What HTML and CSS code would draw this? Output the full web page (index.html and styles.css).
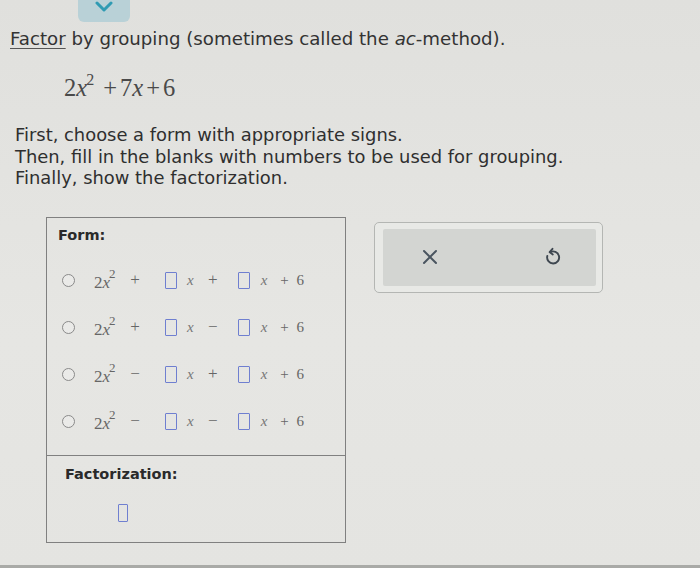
FILE: index.html
```html
<!DOCTYPE html>
<html>
<head>
<meta charset="utf-8">
<link rel="stylesheet" href="styles.css">
</head>
<body>
<div class="page">
  <div class="tab">
    <svg width="20" height="12" viewBox="0 0 20 12"><path d="M3 2 L10 9 L17 2" fill="none" stroke="#2f9bb3" stroke-width="3" stroke-linecap="round" stroke-linejoin="round"/></svg>
  </div>
  <p class="title"><span class="u">Factor</span> by grouping (sometimes called the <i>ac</i>-method).</p>
  <div class="poly">2<i>x</i><sup>2</sup> <span class="op">+</span>7<i>x</i><span class="op">+</span>6</div>
  <div class="instr">
    <div>First, choose a form with appropriate signs.</div>
    <div>Then, fill in the blanks with numbers to be used for grouping.</div>
    <div>Finally, show the factorization.</div>
  </div>
  <div class="work">
    <div class="card">
      <div class="formsec">
        <div class="label">Form:</div>
        <div class="row"><span class="radio"></span><span class="t">2<i>x</i><sup>2</sup></span><span class="s">+</span><span class="blank"></span><i class="x">x</i><span class="s2">+</span><span class="blank b2"></span><i class="x">x</i><span class="c">+ 6</span></div>
        <div class="row"><span class="radio"></span><span class="t">2<i>x</i><sup>2</sup></span><span class="s">+</span><span class="blank"></span><i class="x">x</i><span class="s2">&minus;</span><span class="blank b2"></span><i class="x">x</i><span class="c">+ 6</span></div>
        <div class="row"><span class="radio"></span><span class="t">2<i>x</i><sup>2</sup></span><span class="s">&minus;</span><span class="blank"></span><i class="x">x</i><span class="s2">+</span><span class="blank b2"></span><i class="x">x</i><span class="c">+ 6</span></div>
        <div class="row"><span class="radio"></span><span class="t">2<i>x</i><sup>2</sup></span><span class="s">&minus;</span><span class="blank"></span><i class="x">x</i><span class="s2">&minus;</span><span class="blank b2"></span><i class="x">x</i><span class="c">+ 6</span></div>
      </div>
      <div class="factsec">
        <div class="label">Factorization:</div>
        <span class="blank fblank"></span>
      </div>
    </div>
    <div class="tools">
      <div class="toolsin">
        <svg class="ic" width="18" height="18" viewBox="0 0 18 18"><path d="M3 3 L15 15 M15 3 L3 15" stroke="#4a5560" stroke-width="2" stroke-linecap="round"/></svg>
        <svg class="ic" width="20" height="20" viewBox="0 0 20 20"><path d="M7.2 5.2 A6 6 0 1 1 4.3 9" fill="none" stroke="#3e4750" stroke-width="1.9" stroke-linecap="round"/><path d="M9.5 1.8 L6.6 5.1 L9.8 7.4" fill="none" stroke="#3e4750" stroke-width="1.9" stroke-linecap="round" stroke-linejoin="round"/></svg>
      </div>
    </div>
  </div>
  <div class="bottom"></div>
</div>
</body>
</html>
```

FILE: styles.css
```css
html, body {
  margin: 0;
  padding: 0;
}
body {
  width: 700px;
  height: 568px;
  overflow: hidden;
  background: #e3e3e0;
  font-family: "DejaVu Sans", Verdana, sans-serif;
  color: #2e2e2e;
}
.page {
  position: relative;
  width: 700px;
  height: 568px;
  background: linear-gradient(180deg, #e0e0dd 0%, #e6e6e3 60%, #e4e4e1 100%);
}
.tab {
  margin-left: 78px;
  width: 52px;
  height: 22px;
  background: #b9d1d7;
  border-radius: 0 0 6px 6px;
  display: flex;
  justify-content: center;
  align-items: flex-start;
}
.tab svg { margin-top: 1px; }
.title {
  margin: 5px 0 0 10px;
  font-size: 18.2px;
  line-height: 24px;
  color: #333;
}
.u {
  text-decoration: underline;
  text-decoration-color: #555;
  text-underline-offset: 3px;
}
.poly {
  margin: 23px 0 0 64px;
  font-family: "Liberation Serif", "Times New Roman", serif;
  font-size: 24.5px;
  color: #4a4a4a;
  line-height: 28px;
}
.poly sup {
  font-size: 16px;
  vertical-align: 11px;
  line-height: 0;
  margin-left: -1px;
}
.poly .op { margin: 0 3px; }
.instr {
  margin: 22px 0 0 15px;
  font-size: 17.9px;
  line-height: 21.5px;
  color: #2f2f2f;
}
.work {
  display: flex;
  align-items: flex-start;
  margin-top: 28px;
}
.card {
  margin-left: 46px;
  width: 298px;
  border: 1.5px solid #808080;
}
.label {
  font-weight: bold;
  font-size: 14.5px;
  color: #2a2a2a;
}
.formsec {
  padding: 9px 0 10px 11px;
  border-bottom: 1.5px solid #808080;
}
.formsec .label { margin-bottom: 14px; }
.row {
  display: flex;
  align-items: center;
  height: 47px;
  font-family: "Liberation Serif", "Times New Roman", serif;
  font-size: 15px;
  color: #666;
}
.radio {
  width: 11px;
  height: 11px;
  border: 1.5px solid #8a8a8a;
  border-radius: 50%;
  margin-left: 4px;
  margin-right: 19px;
  background: #eaeae8;
}
.t { width: 30px; position: relative; top: 3px; font-size: 17px; }
.t sup { font-size: 13px; vertical-align: 10px; line-height: 0; margin-left: -1px; }
.s { width: 22px; text-align: center; font-size: 17px; margin-right: 19px; }
.s2 { width: 24px; text-align: center; font-size: 17px; margin: 0 13px 0 7px; }
.blank {
  display: inline-block;
  width: 10px;
  height: 15px;
  border: 1.5px solid #6f7fd0;
  border-radius: 1px;
  margin-right: 10px;
}
.b2 { margin-right: 11px; }
.x { color: #777; font-size: 15px; }
.c { margin-left: 13px; font-size: 15px; word-spacing: 4px; }
.factsec {
  padding: 10px 0 20px 18px;
  height: 56px;
}
.fblank {
  display: block;
  margin: 22px 0 0 53px;
  width: 8px;
  height: 16px;
}
.tools {
  margin-left: 28px;
  margin-top: 5px;
  width: 229px;
  height: 71px;
  border: 1px solid #b4b6b3;
  border-radius: 5px;
  background: #e8e9e6;
  box-sizing: border-box;
  padding: 6px 6px 6px 8px;
}
.toolsin {
  height: 100%;
  background: #d3d5d2;
  border-radius: 2px;
  display: flex;
  align-items: center;
  justify-content: space-between;
  padding: 0 33px 0 38px;
}
.bottom {
  position: absolute;
  left: 0;
  right: 0;
  bottom: 0;
  height: 3px;
  background: #a9aaa7;
}
```
